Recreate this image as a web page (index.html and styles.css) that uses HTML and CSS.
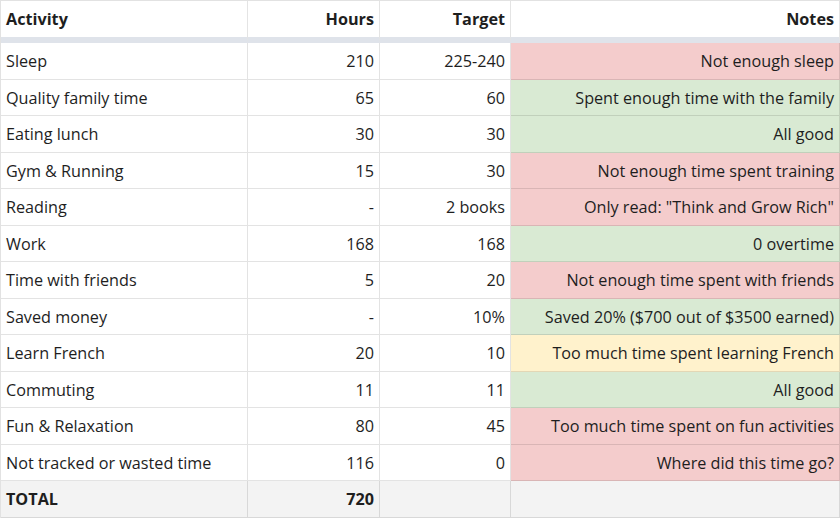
FILE: index.html
```html
<!DOCTYPE html>
<html>
<head>
<meta charset="utf-8">
<link rel="stylesheet" href="styles.css">
</head>
<body>
<div class="sheet">
  <div class="row head">
    <div class="cell l">Activity</div><div class="cell r">Hours</div><div class="cell r">Target</div><div class="cell r">Notes</div>
  </div>
  <div class="body">
    <div class="row"><div class="cell l">Sleep</div><div class="cell r">210</div><div class="cell r">225-240</div><div class="cell r bad">Not enough sleep</div></div>
    <div class="row"><div class="cell l">Quality family time</div><div class="cell r">65</div><div class="cell r">60</div><div class="cell r good">Spent enough time with the family</div></div>
    <div class="row"><div class="cell l">Eating lunch</div><div class="cell r">30</div><div class="cell r">30</div><div class="cell r good">All good</div></div>
    <div class="row"><div class="cell l">Gym &amp; Running</div><div class="cell r">15</div><div class="cell r">30</div><div class="cell r bad">Not enough time spent training</div></div>
    <div class="row"><div class="cell l">Reading</div><div class="cell r">-</div><div class="cell r">2 books</div><div class="cell r bad">Only read: "Think and Grow Rich"</div></div>
    <div class="row"><div class="cell l">Work</div><div class="cell r">168</div><div class="cell r">168</div><div class="cell r good">0 overtime</div></div>
    <div class="row"><div class="cell l">Time with friends</div><div class="cell r">5</div><div class="cell r">20</div><div class="cell r bad">Not enough time spent with friends</div></div>
    <div class="row"><div class="cell l">Saved money</div><div class="cell r">-</div><div class="cell r">10%</div><div class="cell r good">Saved 20% ($700 out of $3500 earned)</div></div>
    <div class="row"><div class="cell l">Learn French</div><div class="cell r">20</div><div class="cell r">10</div><div class="cell r warn">Too much time spent learning French</div></div>
    <div class="row"><div class="cell l">Commuting</div><div class="cell r">11</div><div class="cell r">11</div><div class="cell r good">All good</div></div>
    <div class="row"><div class="cell l">Fun &amp; Relaxation</div><div class="cell r">80</div><div class="cell r">45</div><div class="cell r bad">Too much time spent on fun activities</div></div>
    <div class="row"><div class="cell l">Not tracked or wasted time</div><div class="cell r">116</div><div class="cell r">0</div><div class="cell r bad">Where did this time go?</div></div>
    <div class="row total"><div class="cell l">TOTAL</div><div class="cell r">720</div><div class="cell r"></div><div class="cell r"></div></div>
  </div>
</div>
</body>
</html>
```

FILE: styles.css
```css
html, body {
  margin: 0;
  padding: 0;
  background: #ffffff;
}
.sheet {
  width: 840px;
  display: flex;
  flex-direction: column;
  border-top: 1px solid #e2e2e2;
  border-left: 1px solid #e2e2e2;
  box-sizing: border-box;
  font-family: "Open Sans", "Noto Sans", sans-serif;
  font-size: 16.2px;
  color: #1e1e1e;
}
.body {
  display: flex;
  flex-direction: column;
}
.row {
  display: grid;
  grid-template-columns: 247px 132px 131px 329px;
  height: 37px;
}
.body .row:nth-child(even) {
  height: 36px;
}
.cell {
  display: flex;
  align-items: center;
  padding: 0 5px 0 5px;
  border-right: 1px solid rgba(0, 0, 0, 0.11);
  border-bottom: 1px solid rgba(0, 0, 0, 0.11);
  white-space: nowrap;
  overflow: hidden;
  box-sizing: border-box;
}
.l { justify-content: flex-start; }
.r { justify-content: flex-end; }
.head {
  height: 42px;
  font-weight: 700;
}
.head .cell {
  border-bottom: 6px solid #dfe3ea;
  border-right-color: #e4e4e4;
}
.bad { background: #f4cccc; }
.good { background: #d9ead3; }
.warn { background: #fff2cc; }
.total .cell {
  background: #f3f3f3;
  font-weight: 700;
}
```
